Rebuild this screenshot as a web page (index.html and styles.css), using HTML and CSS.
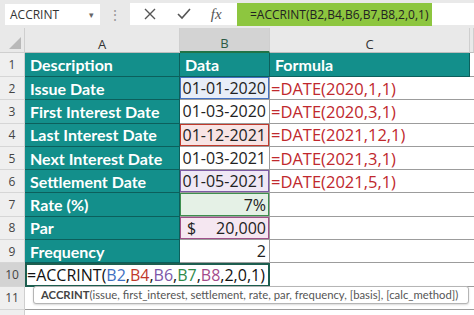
FILE: index.html
```html
<!DOCTYPE html>
<html lang="en">
<head>
<meta charset="utf-8"/>
<title>ACCRINT</title>
<link rel="stylesheet" href="styles.css">
</head>
<body>
<div class="topbar">
  <div class="namebox">ACCRINT <span class="caret">&#9662;</span></div>
  <div class="dots">&#8942;</div>
  <div class="fbar">
    <div class="ficons">
      <svg width="14" height="14" viewBox="0 0 14 14"><path d="M2 2 L12 12 M12 2 L2 12" stroke="#555" stroke-width="1.4" fill="none"/></svg>
      <svg width="16" height="14" viewBox="0 0 16 14"><path d="M2 7 L6 11 L14 2" stroke="#555" stroke-width="1.6" fill="none"/></svg>
      <span class="fx">fx</span>
    </div>
    <div class="finput"><span class="fhl">=ACCRINT(B2,B4,B6,B7,B8,2,0,1)</span></div>
  </div>
</div>

<div class="sheet">
  <div class="corner"><span class="tri"></span></div>
  <div class="colh">A</div>
  <div class="colh sel">B</div>
  <div class="colh">C</div>
  <div class="colh"></div>

  <div class="rn">1</div>
  <div class="c head">Description</div>
  <div class="c head">Data</div>
  <div class="c head">Formula</div>
  <div class="c"></div>

  <div class="rn">2</div>
  <div class="c desc">Issue Date</div>
  <div class="c val r-blue">01-01-2020</div>
  <div class="c fml">=DATE(2020,1,1)</div>
  <div class="c"></div>

  <div class="rn">3</div>
  <div class="c desc">First Interest Date</div>
  <div class="c val">01-03-2020</div>
  <div class="c fml">=DATE(2020,3,1)</div>
  <div class="c"></div>

  <div class="rn">4</div>
  <div class="c desc">Last Interest Date</div>
  <div class="c val r-red">01-12-2021</div>
  <div class="c fml">=DATE(2021,12,1)</div>
  <div class="c"></div>

  <div class="rn">5</div>
  <div class="c desc">Next Interest Date</div>
  <div class="c val">01-03-2021</div>
  <div class="c fml">=DATE(2021,3,1)</div>
  <div class="c"></div>

  <div class="rn">6</div>
  <div class="c desc">Settlement Date</div>
  <div class="c val r-purple">01-05-2021</div>
  <div class="c fml">=DATE(2021,5,1)</div>
  <div class="c"></div>

  <div class="rn">7</div>
  <div class="c desc">Rate (%)</div>
  <div class="c val r-green">7%</div>
  <div class="c"></div>
  <div class="c"></div>

  <div class="rn">8</div>
  <div class="c desc">Par</div>
  <div class="c val r-pink acct"><span>$</span><span>20,000</span></div>
  <div class="c"></div>
  <div class="c"></div>

  <div class="rn">9</div>
  <div class="c desc">Frequency</div>
  <div class="c val">2</div>
  <div class="c"></div>
  <div class="c"></div>

  <div class="rn sel">10</div>
  <div class="c edit">=ACCRINT(<span class="k-blue">B2</span>,<span class="k-red">B4</span>,<span class="k-purple">B6</span>,<span class="k-green">B7</span>,<span class="k-pink">B8</span>,2,0,1)</div>
  <div class="c"></div>
  <div class="c"></div>

  <div class="rn">11</div>
  <div class="c"></div>
  <div class="c"></div>
  <div class="c"></div>
  <div class="c"></div>

  <div class="rn">12</div>
  <div class="c"></div>
  <div class="c"></div>
  <div class="c"></div>
  <div class="c"></div>

  <div class="tip"><b>ACCRINT</b>(issue, first_interest, settlement, rate, par, frequency, [basis], [calc_method])</div>
</div>
</body>
</html>
```

FILE: styles.css
```css
body { margin: 0; background: #fff; font-family: "Open Sans", sans-serif; color: #222; width: 474px; height: 315px; overflow: hidden; }

.topbar { height: 28px; background: #e9e9e9; display: flex; align-items: center; padding: 0 0 0 5px; box-sizing: border-box; }
.namebox { width: 95px; height: 21px; background: #fff; box-sizing: border-box; padding: 0 6px 0 5px; display: flex; align-items: center; justify-content: space-between; font-size: 12px; color: #333; }
.caret { font-size: 9px; color: #666; }
.dots { width: 30px; text-align: center; color: #999; font-size: 14px; }
.fbar { flex: 1; display: flex; height: 22px; background: #fff; }
.ficons { width: 107px; display: flex; align-items: center; justify-content: space-around; padding: 0 6px 0 4px; box-sizing: border-box; }
.fx { font-family: "Liberation Serif", serif; font-style: italic; color: #555; font-size: 15px; }
.finput { flex: 1; display: flex; align-items: center; }
.fhl { background: #8dc63f; height: 23px; line-height: 23px; padding: 0 4px 0 13px; font-size: 12px; color: #222; }

.sheet { position: relative; display: grid; grid-template-columns: 25px 155px 90px 200px 1fr; grid-template-rows: 25px 24px repeat(11, 23.3px); }
.corner { background: #e9e9e9; border-right: 1px solid #cfcfcf; border-bottom: 1px solid #cfcfcf; position: relative; }
.tri { position: absolute; right: 3px; bottom: 3px; width: 0; height: 0; border-left: 12px solid transparent; border-bottom: 12px solid #b9b9b9; }
.colh { background: #e9e9e9; border-right: 1px solid #cfcfcf; border-bottom: 1px solid #bdbdbd; display: flex; align-items: center; justify-content: center; font-size: 13px; color: #333; padding-top: 7px; box-sizing: border-box; }
.colh.sel { background: #d3d3d3; color: #2c5a45; border-bottom: 2px solid #217346; }

.rn { background: #efefef; border-right: 1px solid #cfcfcf; border-bottom: 1px solid #d6d6d6; display: flex; align-items: center; justify-content: center; font-size: 12px; color: #444; }
.rn.sel { background: #d3d3d3; }

.c { border-bottom: 1px solid #9c9c9c; display: flex; align-items: center; font-size: 16px; white-space: nowrap; overflow: hidden; box-sizing: border-box; }
.head, .desc { background: #138f8b; color: #fff; font-family: "Lato", sans-serif; font-weight: bold; padding-left: 5px; border-bottom: 1px solid #0c5f5c; border-right: 1px solid #0c5f5c; }
.val { justify-content: flex-end; padding-right: 3px; border-right: 1px solid #9c9c9c; color: #222; }
.fml { color: #c0282d; padding-left: 1px; font-size: 16.5px; }
.acct { justify-content: space-between; padding-left: 7px; }

.r-blue { background: #e8eef8; box-shadow: inset 0 0 0 1px #4472c4; }
.r-red { background: #f8e4e4; box-shadow: inset 0 0 0 1px #c0392b; }
.r-purple { background: #efe8f5; box-shadow: inset 0 0 0 1px #7d5ba6; }
.r-green { background: #e5f1e6; box-shadow: inset 0 0 0 1px #3e8f4f; }
.r-pink { background: #f5e7f1; box-shadow: inset 0 0 0 1px #a0508a; }

.edit { grid-column: span 2; border: 2px solid #1d5e4f; font-size: 16px; padding-left: 0; background: #fff; color: #111; }
.k-blue { color: #3e6fc2; }
.k-red { color: #c0392b; }
.k-purple { color: #7b57a8; }
.k-green { color: #2f8a4a; }
.k-pink { color: #a34b8a; }

.tip { position: absolute; left: 33px; top: 258px; width: 436px; height: 18px; box-sizing: border-box; border: 1px solid #b5b5b5; border-radius: 3px; background: #fff; font-family: "Lato", sans-serif; font-size: 11.3px; color: #555; padding-left: 7px; line-height: 16px; white-space: nowrap; overflow: hidden; box-shadow: 0 1px 2px rgba(0,0,0,.15); }
.tip b { color: #444; }
```
